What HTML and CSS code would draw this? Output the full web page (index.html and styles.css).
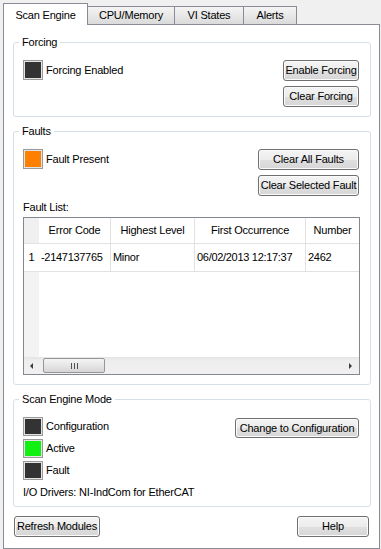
FILE: index.html
```html
<!DOCTYPE html>
<html>
<head>
<meta charset="utf-8">
<title>Scan Engine</title>
<link rel="stylesheet" href="styles.css">
</head>
<body>
<div class="window">
  <div class="tabs">
    <div class="tab tab-active tab-scan">Scan Engine</div>
    <div class="tab tab-cpu">CPU/Memory</div>
    <div class="tab tab-vi">VI States</div>
    <div class="tab tab-alerts">Alerts</div>
  </div>
  <div class="panel">
    <fieldset class="group">
      <legend>Forcing</legend>
      <div class="group-row">
        <div class="indicator"><span class="led led-off"></span><span class="led-label">Forcing Enabled</span></div>
        <div class="btn-stack">
          <button class="btn btn-forcing">Enable Forcing</button>
          <button class="btn btn-forcing">Clear Forcing</button>
        </div>
      </div>
    </fieldset>

    <fieldset class="group">
      <legend>Faults</legend>
      <div class="group-row">
        <div class="indicator"><span class="led led-orange"></span><span class="led-label">Fault Present</span></div>
        <div class="btn-stack">
          <button class="btn btn-faults">Clear All Faults</button>
          <button class="btn btn-faults">Clear Selected Fault</button>
        </div>
      </div>
      <div class="list-label">Fault List:</div>
      <div class="table">
        <div class="trow thead">
          <div class="cell rowhead"></div>
          <div class="cell">Error Code</div>
          <div class="cell">Highest Level</div>
          <div class="cell">First Occurrence</div>
          <div class="cell cell-last">Number</div>
        </div>
        <div class="trow tdata">
          <div class="cell rowhead">1</div>
          <div class="cell">-2147137765</div>
          <div class="cell">Minor</div>
          <div class="cell">06/02/2013 12:17:37</div>
          <div class="cell cell-last">2462</div>
        </div>
        <div class="tfill">
          <div class="fill-head"></div>
          <div class="fill-body"></div>
        </div>
        <div class="hscroll">
          <div class="sb-arrow">
            <svg width="17" height="16" viewBox="0 0 17 16"><polygon points="6,8 9,5 9,11" fill="#3c3c3c"/></svg>
          </div>
          <div class="sb-track">
            <div class="sb-thumb">
              <svg width="7" height="6" viewBox="0 0 7 6"><rect x="0" y="0" width="1" height="6" fill="#505050"/><rect x="3" y="0" width="1" height="6" fill="#505050"/><rect x="6" y="0" width="1" height="6" fill="#505050"/></svg>
            </div>
          </div>
          <div class="sb-arrow">
            <svg width="17" height="16" viewBox="0 0 17 16"><polygon points="10,8 7,5 7,11" fill="#3c3c3c"/></svg>
          </div>
        </div>
      </div>
    </fieldset>

    <fieldset class="group group-mode">
      <legend>Scan Engine Mode</legend>
      <div class="group-row">
        <div class="led-list">
          <div class="indicator"><span class="led led-off led-short"></span><span class="led-label">Configuration</span></div>
          <div class="indicator"><span class="led led-green led-short"></span><span class="led-label">Active</span></div>
          <div class="indicator"><span class="led led-off led-short"></span><span class="led-label">Fault</span></div>
        </div>
        <button class="btn btn-config">Change to Configuration</button>
      </div>
      <div class="drivers">I/O Drivers: NI-IndCom for EtherCAT</div>
    </fieldset>

    <div class="footer">
      <button class="btn btn-refresh">Refresh Modules</button>
      <button class="btn btn-help">Help</button>
    </div>
  </div>
</div>
</body>
</html>
```

FILE: styles.css
```css
html, body {
  margin: 0;
  padding: 0;
}

body {
  background: #f0f0f0;
  font-family: "Liberation Sans", Arial, sans-serif;
  font-size: 11px;
  line-height: 13px;
  letter-spacing: -0.2px;
  color: #000;
}

.window {
  width: 381px;
  height: 549px;
  box-sizing: border-box;
  padding: 3px 1px 0 3px;
  display: flex;
  flex-direction: column;
}

/* Tabs */
.tabs {
  display: flex;
  align-items: flex-end;
  height: 21px;
  flex: none;
  position: relative;
  z-index: 1;
}

.tab {
  box-sizing: border-box;
  height: 18px;
  margin-left: -1px;
  padding-top: 2px;
  border: 1px solid #898c95;
  border-bottom: none;
  background: linear-gradient(#f4f4f4, #e8e8e8 50%, #dadada);
  text-align: center;
  white-space: nowrap;
}

.tab-active {
  height: 22px;
  margin-left: 0;
  margin-bottom: -1px;
  padding-top: 5px;
  background: #fff;
  position: relative;
  z-index: 2;
}

.tab-scan { width: 85px; }
.tab-cpu { width: 88px; }
.tab-vi { width: 70px; }
.tab-alerts { width: 54px; }

/* Panel */
.panel {
  flex: 1;
  box-sizing: border-box;
  border: 1px solid #898c95;
  background: #fff;
  padding: 11px 8px 0 9px;
  display: flex;
  flex-direction: column;
}

/* Group boxes */
.group {
  margin: 0 0 8px;
  padding: 0 11px 9px 9px;
  border: 1px solid #d5dfe5;
  border-radius: 3px;
  min-width: 0;
}

.group legend {
  padding: 0 3px;
  margin-left: -4px;
  line-height: 13px;
}

.group-row {
  display: flex;
  justify-content: space-between;
  align-items: flex-start;
  margin-top: 11px;
}

.indicator {
  display: flex;
  align-items: center;
  gap: 3px;
}

.led {
  display: block;
  box-sizing: border-box;
  width: 20px;
  height: 20px;
  border: 1px solid #9a9a9a;
  box-shadow: inset 0 0 0 1px #e4e4e4;
  background: #333;
}

.led-short { height: 19px; }
.led-off { background: #333333; }
.led-orange { background: #ff8000; }
.led-green { background: #12ef12; }

.led-list {
  display: flex;
  flex-direction: column;
  gap: 3px;
}

.btn-stack {
  display: flex;
  flex-direction: column;
  gap: 5px;
}

/* Buttons */
.btn {
  box-sizing: border-box;
  height: 21px;
  padding: 0;
  border: 1px solid #707070;
  border-radius: 3px;
  background: linear-gradient(#f4f4f4, #ececec 50%, #e0e0e0 51%, #d6d6d6);
  box-shadow: inset 0 0 0 1px #fbfbfb;
  font-family: inherit;
  font-size: 11px;
  letter-spacing: -0.2px;
  line-height: 13px;
  color: #000;
  text-align: center;
  white-space: nowrap;
}

.btn-forcing { width: 76px; }
.btn-faults { width: 101px; }
.btn-config { width: 124px; height: 20px; margin-top: 1px; }
.btn-refresh { width: 86px; }
.btn-help { width: 72px; }

/* Fault list */
.list-label {
  margin-top: 5px;
}

.table {
  margin-top: 3px;
  margin-right: -1px;
  border: 1px solid #828790;
  display: flex;
  flex-direction: column;
  overflow: hidden;
}

.trow {
  box-sizing: border-box;
  display: grid;
  grid-template-columns: 15px 72px 84px 111px 53px;
  border-bottom: 1px solid #e2e2e2;
}

.thead { height: 26px; }
.tdata { height: 28px; }

.cell {
  box-sizing: border-box;
  border-right: 1px solid #e2e2e2;
  display: flex;
  align-items: center;
  padding-left: 2px;
  white-space: nowrap;
  overflow: hidden;
}

.thead .cell {
  justify-content: center;
  padding-left: 0;
}

.tdata .cell {
  letter-spacing: -0.3px;
}

.cell.rowhead {
  border-right: none;
  padding-left: 0;
  justify-content: center;
}

.thead .rowhead { background: #f0f0f0; }

.cell-last { border-right: none; }

.tfill {
  height: 85px;
  flex: none;
  display: flex;
}

.fill-head {
  width: 15px;
  background: #f3f3f3;
}

.fill-body {
  flex: 1;
  background: #fff;
}

.hscroll {
  height: 17px;
  flex: none;
  display: flex;
  background: linear-gradient(#e4e4e4, #eeeeee 20%, #f0f0f0);
}

.sb-arrow {
  width: 17px;
  display: flex;
  align-items: center;
  justify-content: center;
}

.sb-track {
  flex: 1;
  padding: 1px 0 1px 2px;
}

.sb-thumb {
  box-sizing: border-box;
  width: 62px;
  height: 15px;
  border: 1px solid #979797;
  border-radius: 2px;
  background: linear-gradient(#f4f4f4, #e6e6e6 50%, #d6d6d6);
  display: flex;
  align-items: center;
  justify-content: center;
}

.sb-arrow svg,
.sb-thumb svg { display: block; }

/* Scan engine mode */
.group-mode {
  padding-bottom: 7px;
}

.drivers {
  margin-top: 6px;
}

/* Footer */
.footer {
  display: flex;
  justify-content: space-between;
  margin-top: 1px;
  padding: 0 2px 0 1px;
}
```
